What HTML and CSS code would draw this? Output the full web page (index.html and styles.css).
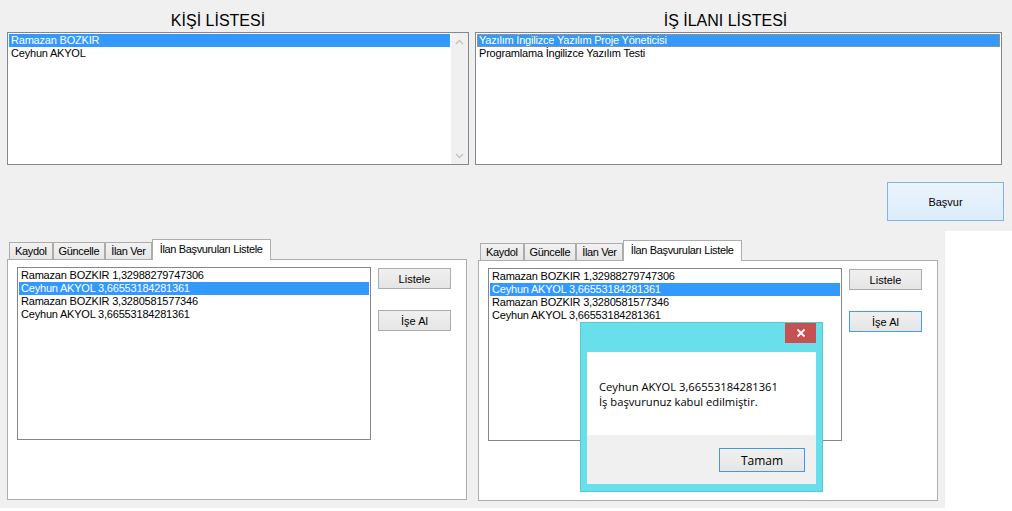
FILE: index.html
```html
<!DOCTYPE html>
<html lang="tr">
<head>
<meta charset="utf-8">
<title>Kişi ve İş İlanı Listesi</title>
<link rel="stylesheet" href="styles.css">
</head>
<body>
<div class="top">
  <section class="col col-left">
    <h2 class="title">KİŞİ LİSTESİ</h2>
    <div class="listbox listbox-top">
      <ul class="items">
        <li class="sel">Ramazan BOZKIR</li>
        <li>Ceyhun AKYOL</li>
      </ul>
      <div class="vscroll">
        <span class="sb-btn"><svg width="9" height="6" viewBox="0 0 9 6"><path d="M1 5 L4.5 1.5 L8 5" fill="none" stroke="#c2c2c2" stroke-width="1.3"/></svg></span>
        <span class="sb-btn"><svg width="9" height="6" viewBox="0 0 9 6"><path d="M1 1 L4.5 4.5 L8 1" fill="none" stroke="#c2c2c2" stroke-width="1.3"/></svg></span>
      </div>
    </div>
  </section>
  <section class="col col-right">
    <h2 class="title title-right">İŞ İLANI LİSTESİ</h2>
    <div class="listbox listbox-top">
      <ul class="items">
        <li class="sel focus">Yazılım İngilizce Yazılım Proje Yöneticisi</li>
        <li>Programlama İngilizce Yazılım Testi</li>
      </ul>
    </div>
    <div class="actions">
      <button class="btn-apply">Başvur</button>
    </div>
  </section>
</div>
<div class="bottom">
  <section class="shot shot-left">
    <div class="tabstrip">
      <span class="tab">Kaydol</span>
      <span class="tab">Güncelle</span>
      <span class="tab">İlan Ver</span>
      <span class="tab active">İlan Başvuruları Listele</span>
    </div>
    <div class="tabpanel">
      <div class="listbox listbox-tab">
        <ul class="items">
          <li>Ramazan BOZKIR 1,32988279747306</li>
          <li class="sel">Ceyhun AKYOL 3,66553184281361</li>
          <li>Ramazan BOZKIR 3,3280581577346</li>
          <li>Ceyhun AKYOL 3,66553184281361</li>
        </ul>
      </div>
      <div class="side">
        <button class="btn">Listele</button>
        <button class="btn">İşe Al</button>
      </div>
    </div>
  </section>
  <section class="shot shot-right">
    <div class="tabstrip">
      <span class="tab">Kaydol</span>
      <span class="tab">Güncelle</span>
      <span class="tab">İlan Ver</span>
      <span class="tab active">İlan Başvuruları Listele</span>
    </div>
    <div class="tabpanel">
      <div class="listbox listbox-tab">
        <ul class="items">
          <li>Ramazan BOZKIR 1,32988279747306</li>
          <li class="sel">Ceyhun AKYOL 3,66553184281361</li>
          <li>Ramazan BOZKIR 3,3280581577346</li>
          <li>Ceyhun AKYOL 3,66553184281361</li>
        </ul>
      </div>
      <div class="side">
        <button class="btn">Listele</button>
        <button class="btn btn-focus">İşe Al</button>
      </div>
    </div>
    <div class="dialog">
      <div class="dlg-title">
        <span class="dlg-close"><svg width="10" height="10" viewBox="0 0 10 10"><path d="M1.5 1.5 L8.5 8.5 M8.5 1.5 L1.5 8.5" stroke="#fff" stroke-width="1.8" fill="none"/></svg></span>
      </div>
      <div class="dlg-body">
        <div class="dlg-msg">
          <p>Ceyhun AKYOL 3,66553184281361</p>
          <p>İş başvurunuz kabul edilmiştir.</p>
        </div>
        <div class="dlg-foot">
          <button class="dlg-btn">Tamam</button>
        </div>
      </div>
    </div>
  </section>
</div>
</body>
</html>
```

FILE: styles.css
```css
html, body {
  margin: 0;
  padding: 0;
}
body {
  width: 1012px;
  height: 511px;
  overflow: hidden;
  background: #ffffff;
  font-family: "Liberation Sans", Arial, sans-serif;
  font-size: 11px;
  color: #000;
}

/* ---------- top area ---------- */
.top {
  display: flex;
  height: 231px;
  background: #f0f0f0;
  padding-left: 7px;
  box-sizing: border-box;
}
.col-left {
  width: 462px;
}
.col-right {
  width: 527px;
  margin-left: 6px;
  display: flex;
  flex-direction: column;
}
.title {
  margin: 12px 0 2px;
  padding-right: 40px;
  font-size: 16px;
  line-height: 18px;
  font-weight: normal;
  text-align: center;
}
.title-right {
  padding-right: 26px;
}

.listbox {
  display: flex;
  background: #fff;
  border: 1px solid #828790;
  box-sizing: border-box;
}
.listbox-top {
  height: 133px;
}
.items {
  list-style: none;
  margin: 0;
  padding: 1px;
  flex: 1;
  min-width: 0;
}
.items li {
  height: 13px;
  line-height: 13px;
  padding-left: 2px;
  white-space: nowrap;
  letter-spacing: -0.2px;
}
.items li.sel {
  background: #3399ff;
  color: #fff;
}
.items li.focus {
  outline: 1px dotted #e0902a;
  outline-offset: -1px;
}
.vscroll {
  width: 17px;
  background: #f0f0f0;
  display: flex;
  flex-direction: column;
  justify-content: space-between;
}
.sb-btn {
  height: 17px;
  display: flex;
  align-items: center;
  justify-content: center;
}

.actions {
  display: flex;
  justify-content: flex-end;
  margin-top: 17px;
  margin-right: -2px;
}
.btn-apply {
  width: 117px;
  height: 39px;
  border: 1px solid #7eb4ea;
  background: linear-gradient(#ecf4fc, #dcecfc);
  font-family: "Liberation Sans", Arial, sans-serif;
  font-size: 11px;
  color: #000;
  padding: 0;
}

/* ---------- bottom screenshots ---------- */
.bottom {
  display: flex;
}
.shot {
  height: 277px;
  background: #f0f0f0;
  box-sizing: border-box;
  position: relative;
}
.shot-left {
  width: 470px;
  padding: 8px 0 0 7px;
}
.shot-right {
  width: 475px;
  padding: 9px 0 0 8px;
}

.tabstrip {
  display: flex;
  align-items: flex-end;
  height: 20px;
  padding-left: 2px;
}
.tab {
  height: 17px;
  box-sizing: border-box;
  border: 1px solid #acacac;
  border-bottom: none;
  background: linear-gradient(#f2f2f2, #e6e6e6);
  padding: 0 5px;
  line-height: 16px;
  white-space: nowrap;
  letter-spacing: -0.35px;
}
.tab.active {
  height: 21px;
  margin-bottom: -1px;
  background: #fff;
  border-color: #adadad;
  padding: 0 7px;
  line-height: 18px;
  position: relative;
  z-index: 1;
}
.tabpanel {
  width: 460px;
  height: 241px;
  box-sizing: border-box;
  border: 1px solid #adadad;
  background: #fff;
  padding: 7px 0 0 9px;
  display: flex;
  gap: 7px;
}
.listbox-tab {
  width: 354px;
  height: 173px;
}
.side {
  display: flex;
  flex-direction: column;
  gap: 21px;
  padding-top: 1px;
}
.btn {
  width: 73px;
  height: 21px;
  padding: 0;
  border: 1px solid #acacac;
  background: linear-gradient(#f0f0f0, #e5e5e5);
  font-family: "Liberation Sans", Arial, sans-serif;
  font-size: 11px;
  color: #000;
}
.btn-focus {
  border-color: #4a9be6;
}

/* ---------- message box ---------- */
.dialog {
  position: absolute;
  left: 110px;
  top: 91px;
  width: 243px;
  height: 170px;
  box-sizing: border-box;
  background: #68dfea;
  border: 1px solid #55c9d6;
  padding: 0 6px 7px;
  display: flex;
  flex-direction: column;
  font-family: "Open Sans", "Noto Sans", sans-serif;
}
.dlg-title {
  height: 29px;
  display: flex;
  justify-content: flex-end;
  align-items: flex-start;
}
.dlg-close {
  width: 31px;
  height: 20px;
  background: #c75050;
  display: flex;
  align-items: center;
  justify-content: center;
}
.dlg-body {
  flex: 1;
  display: flex;
  flex-direction: column;
  background: #fff;
}
.dlg-msg {
  height: 83px;
  box-sizing: border-box;
  padding: 27px 0 0 12px;
  font-size: 11.2px;
  line-height: 15px;
}
.dlg-msg p {
  margin: 0;
  white-space: nowrap;
}
.dlg-foot {
  flex: 1;
  background: #f0f0f0;
  display: flex;
  justify-content: flex-end;
  align-items: flex-start;
  padding: 13px 11px 0 0;
}
.dlg-btn {
  width: 86px;
  height: 24px;
  padding: 0;
  border: 1px solid #3c9ae8;
  background: linear-gradient(#f0f0f0, #e5e5e5);
  font-family: "Open Sans", "Noto Sans", sans-serif;
  font-size: 12px;
  color: #000;
}
```
